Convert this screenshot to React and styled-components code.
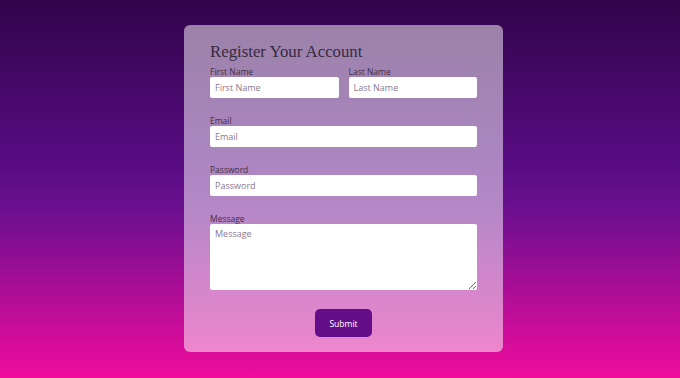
import React from "react";
import styled, { createGlobalStyle } from "styled-components";

const Global = createGlobalStyle`
  html, body { margin: 0; padding: 0; }
  body {
    min-height: 378px;
    background: linear-gradient(to bottom, #31044a 0%, #5a0c85 45%, #6a0f8f 55%, #f00c9d 100%);
    font-family: "Open Sans", "Noto Sans", sans-serif;
  }
  * { box-sizing: border-box; }
`;

const Page = styled.div`
  min-height: 378px;
  display: flex;
  justify-content: center;
  align-items: flex-start;
  padding: 25px 0 0 7px;
`;

const Card = styled.form`
  width: 319px;
  height: 327px;
  padding: 17px 26px 15px;
  border-radius: 6px;
  background: rgba(255, 255, 255, 0.5);
  display: flex;
  flex-direction: column;
`;

const Title = styled.h1`
  margin: 0 0 6px;
  font-family: "Liberation Serif", "Times New Roman", serif;
  font-weight: normal;
  font-size: 16.8px;
  line-height: 19px;
  color: #362a40;
`;

const Row = styled.div`
  display: grid;
  grid-template-columns: 1fr 1fr;
  gap: 10px;
`;

const Group = styled.div`
  display: flex;
  flex-direction: column;
  margin-bottom: ${(p) => p.$mb ?? 18}px;
`;

const Label = styled.label`
  font-size: 8.5px;
  line-height: 10px;
  color: #3f3047;
`;

const Input = styled.input`
  height: 21px;
  width: 100%;
  border: none;
  border-radius: 2px;
  background: #fff;
  padding: 0 5px;
  font-family: "Open Sans", sans-serif;
  font-size: 9px;
  color: #333;
  outline: none;
  &::placeholder { color: #8b7a92; }
`;

const TextArea = styled.textarea`
  height: 66px;
  width: 100%;
  border: none;
  border-radius: 2px;
  background: #fff;
  padding: 3px 5px;
  font-family: "Open Sans", sans-serif;
  font-size: 9px;
  color: #333;
  outline: none;
  resize: vertical;
  &::placeholder { color: #8b7a92; }
`;

const Submit = styled.button`
  align-self: center;
  width: 57px;
  height: 28px;
  border: none;
  border-radius: 5px;
  background: #640f89;
  color: #fff;
  font-family: "Open Sans", sans-serif;
  font-size: 8.5px;
  cursor: pointer;
`;

export default function App() {
  return (
    <>
      <Global />
      <Page>
        <Card onSubmit={(e) => e.preventDefault()}>
          <Title>Register Your Account</Title>
          <Row>
            <Group>
              <Label>First Name</Label>
              <Input placeholder="First Name" />
            </Group>
            <Group>
              <Label>Last Name</Label>
              <Input placeholder="Last Name" />
            </Group>
          </Row>
          <Group>
            <Label>Email</Label>
            <Input placeholder="Email" />
          </Group>
          <Group>
            <Label>Password</Label>
            <Input type="password" placeholder="Password" />
          </Group>
          <Group $mb={19}>
            <Label>Message</Label>
            <TextArea placeholder="Message" />
          </Group>
          <Submit type="submit">Submit</Submit>
        </Card>
      </Page>
    </>
  );
}
